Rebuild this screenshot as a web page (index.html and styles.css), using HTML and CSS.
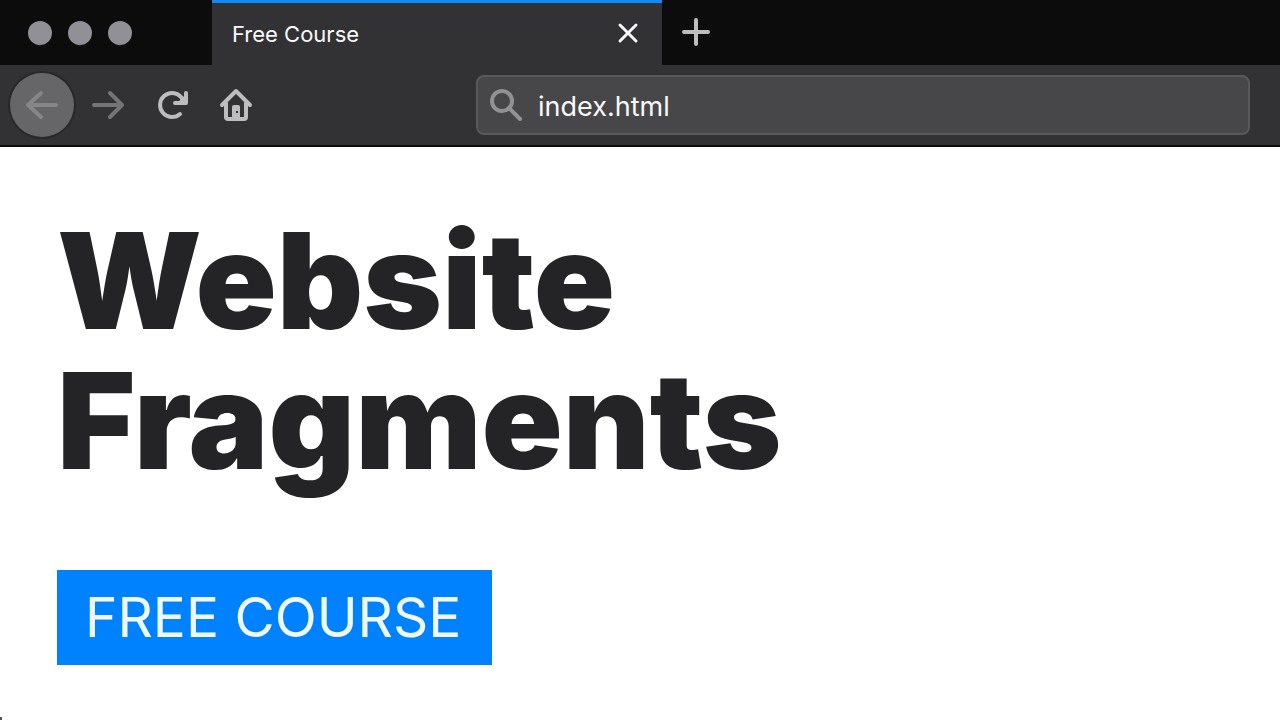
FILE: index.html
```html
<!DOCTYPE html>
<html lang="en">
  <head>
    <meta charset="UTF-8" />
    <meta name="viewport" content="width=device-width, initial-scale=1.0" />
    <title>Free Course</title>
    <link rel="stylesheet" href="styles.css">
  </head>
  <body>
    <header class="browser">
      <div class="tab-bar">
        <div class="window-buttons">
          <button class="dot" type="button" aria-label="Close window"></button>
          <button class="dot" type="button" aria-label="Minimize window"></button>
          <button class="dot" type="button" aria-label="Zoom window"></button>
        </div>
        <div class="tab">
          <span class="tab-title">Free Course</span>
          <button class="icon-button tab-close" type="button" aria-label="Close tab">
            <svg width="24" height="24" viewBox="0 0 24 24">
              <path d="M4 3 L20 19 M20 3 L4 19" />
            </svg>
          </button>
        </div>
        <button class="icon-button new-tab" type="button" aria-label="New tab">
          <svg width="32" height="32" viewBox="0 0 32 32">
            <path d="M16 4 V28 M4 16 H28" />
          </svg>
        </button>
      </div>

      <nav class="toolbar">
        <button class="icon-button back" type="button" aria-label="Back">
          <svg width="40" height="40" viewBox="0 0 40 40">
            <path d="M34 20 H6 M19 8 L6 20 L19 32" />
          </svg>
        </button>
        <button class="icon-button forward" type="button" aria-label="Forward">
          <svg width="40" height="40" viewBox="0 0 40 40">
            <path d="M6 20 H34 M22 8 L34 20 L22 32" />
          </svg>
        </button>
        <button class="icon-button" type="button" aria-label="Reload">
          <svg width="40" height="40" viewBox="0 0 40 40">
            <path d="M28 29 A12 12 0 1 1 29 12 L32 16" />
            <path d="M34 8 V18 H23" />
            <path class="filled" d="M33 13 V18 H28 Z" />
          </svg>
        </button>
        <button class="icon-button" type="button" aria-label="Home">
          <svg width="40" height="40" viewBox="0 0 40 40">
            <path d="M6 20 L20 6 L34 20" />
            <path d="M10 18 V32 Q10 34 12 34 H28 Q30 34 30 32 V18" />
            <path class="filled" d="M18 22 H22 V32 H18 Z" />
            <rect class="knob" x="20" y="26" width="2" height="2" />
          </svg>
        </button>
        <label class="address">
          <svg width="36" height="36" viewBox="0 0 36 36" aria-hidden="true">
            <circle cx="14" cy="14" r="10" />
            <path d="M21 21 L32 32" />
          </svg>
          <input type="text" value="index.html" aria-label="Address" />
        </label>
      </nav>
    </header>

    <main class="content">
      <h1>Website<br />Fragments</h1>
      <a class="course-link" href="#">FREE COURSE</a>
    </main>
    <div class="corner"></div>
  </body>
</html>
```

FILE: styles.css
```css
* {
  box-sizing: border-box;
}
body {
  margin: 0;
  min-height: 100vh;
  display: flex;
  flex-direction: column;
  background-color: #fff;
  color: #242426;
  font-family: Inter, "Liberation Sans", sans-serif;
}
svg {
  display: block;
  fill: none;
  stroke: currentColor;
  stroke-width: 4;
  stroke-linecap: round;
  stroke-linejoin: round;
}
button {
  padding: 0;
  border: none;
  background: none;
  cursor: pointer;
}
.browser {
  border-bottom: 2px solid #0c0c0d;
  background-color: #323234;
}
.tab-bar {
  display: flex;
  height: 65px;
  background-color: #0c0c0d;
}
.window-buttons {
  display: flex;
  align-items: center;
  gap: 16px;
  width: 212px;
  padding-left: 28px;
}
.dot {
  width: 24px;
  height: 24px;
  border-radius: 50%;
  background-color: #919096;
}
.tab {
  display: flex;
  align-items: center;
  justify-content: space-between;
  width: 450px;
  padding: 0 22px 0 20px;
  border-top: 3px solid #1289f5;
  background-color: #323234;
  color: #f9f9fa;
}
.tab-title {
  font-size: 22px;
}
.icon-button {
  display: flex;
  align-items: center;
  justify-content: center;
  width: 64px;
  height: 64px;
  border-radius: 50%;
  color: #bdbdbf;
}
.tab-close {
  width: 24px;
  height: 24px;
  color: #f9f9fa;
}
.tab-close svg {
  stroke-width: 3;
}
.new-tab {
  width: 68px;
}
.toolbar {
  display: flex;
  align-items: center;
  height: 80px;
  padding: 0 30px 0 10px;
}
.back {
  background-color: #666668;
  box-shadow: 0 0 0 2px #28282a;
  color: #868688;
}
.forward {
  margin-left: 2px;
  color: #757577;
}
.filled {
  fill: currentColor;
}
.knob {
  fill: #323234;
  stroke: none;
}
.address {
  display: flex;
  flex: 1;
  align-items: center;
  gap: 14px;
  height: 60px;
  margin-left: 208px;
  padding: 0 10px;
  border: 2px solid #59595b;
  border-radius: 8px;
  background-color: #474749;
  color: #929294;
}
.address input {
  flex: 1;
  min-width: 0;
  padding: 2px 0 0;
  border: none;
  outline: none;
  background: none;
  color: #f9f9fa;
  font-family: inherit;
  font-size: 27px;
}
.content {
  flex: 1;
  padding: 63px 57px 0;
}
h1 {
  margin: 0 0 80px;
  font-size: 134px;
  font-weight: 900;
  line-height: 140px;
}
.course-link {
  display: inline-block;
  padding: 0 31px 0 28px;
  background-color: #0082ff;
  color: #f0f8ff;
  font-size: 55px;
  font-weight: 400;
  line-height: 95px;
  text-decoration: none;
}
.corner {
  width: 2px;
  height: 3px;
  background-color: #555;
}
```
